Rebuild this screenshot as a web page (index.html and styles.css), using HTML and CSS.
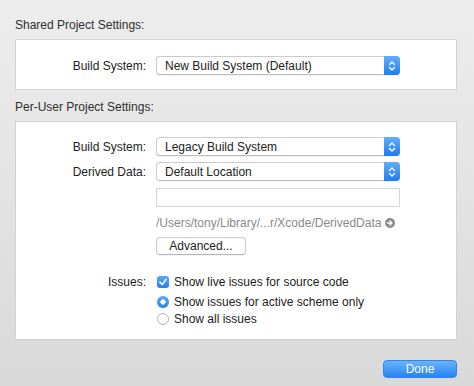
FILE: index.html
```html
<!DOCTYPE html>
<html lang="en">
<head>
    <meta charset="UTF-8">
    <title>Project Settings</title>
    <link rel="stylesheet" href="styles.css">
</head>
<body>
    <div class="sheet">
        <h3 class="section-title">Shared Project Settings:</h3>
        <div class="box box-shared">
            <div class="row">
                <span class="label">Build System:</span>
                <div class="popup">
                    <span class="popup-text">New Build System (Default)</span>
                    <span class="stepper">
                        <svg width="8" height="12" viewBox="0 0 8 12"><path d="M1.5 4.5 L4 2 L6.5 4.5 M1.5 7.5 L4 10 L6.5 7.5" fill="none" stroke="#fff" stroke-width="1.4" stroke-linecap="round" stroke-linejoin="round"/></svg>
                    </span>
                </div>
            </div>
        </div>

        <h3 class="section-title">Per-User Project Settings:</h3>
        <div class="box box-user">
            <div class="row">
                <span class="label">Build System:</span>
                <div class="popup">
                    <span class="popup-text">Legacy Build System</span>
                    <span class="stepper">
                        <svg width="8" height="12" viewBox="0 0 8 12"><path d="M1.5 4.5 L4 2 L6.5 4.5 M1.5 7.5 L4 10 L6.5 7.5" fill="none" stroke="#fff" stroke-width="1.4" stroke-linecap="round" stroke-linejoin="round"/></svg>
                    </span>
                </div>
            </div>
            <div class="row row-tight">
                <span class="label">Derived Data:</span>
                <div class="popup">
                    <span class="popup-text">Default Location</span>
                    <span class="stepper">
                        <svg width="8" height="12" viewBox="0 0 8 12"><path d="M1.5 4.5 L4 2 L6.5 4.5 M1.5 7.5 L4 10 L6.5 7.5" fill="none" stroke="#fff" stroke-width="1.4" stroke-linecap="round" stroke-linejoin="round"/></svg>
                    </span>
                </div>
            </div>
            <div class="row row-field">
                <span class="label"></span>
                <div class="text-field"></div>
            </div>
            <div class="row row-path">
                <span class="label"></span>
                <div class="path">
                    /Users/tony/Library/...r/Xcode/DerivedData
                    <svg width="10" height="10" viewBox="0 0 10 10"><circle cx="5" cy="5" r="5" fill="#8a8a8a"/><path d="M2.5 5 H7 M5 3 L7 5 L5 7" fill="none" stroke="#fff" stroke-width="1.3" stroke-linecap="round" stroke-linejoin="round"/></svg>
                </div>
            </div>
            <div class="row row-button">
                <span class="label"></span>
                <div><button class="push">Advanced...</button></div>
            </div>
            <div class="row row-issues">
                <span class="label">Issues:</span>
                <div class="options">
                    <div class="option option-first">
                        <span class="checkbox">
                            <svg width="10" height="10" viewBox="0 0 10 10"><path d="M2 5.2 L4.2 7.5 L8 2.5" fill="none" stroke="#fff" stroke-width="1.6" stroke-linecap="round" stroke-linejoin="round"/></svg>
                        </span>
                        Show live issues for source code
                    </div>
                    <div class="option">
                        <span class="radio on"></span>
                        Show issues for active scheme only
                    </div>
                    <div class="option">
                        <span class="radio"></span>
                        Show all issues
                    </div>
                </div>
            </div>
        </div>

        <div class="footer">
            <button class="done">Done</button>
        </div>
    </div>
</body>
</html>
```

FILE: styles.css
```css
html, body {
    height: 100%;
}
body {
    margin: 0;
    background: linear-gradient(#ededed, #d9d9d9);
    font-family: 'Liberation Sans', Arial, sans-serif;
    font-size: 12px;
    color: #222;
}
.sheet {
    padding: 17px 17px 0 15px;
}
.section-title {
    margin: 0;
    font-size: 12px;
    font-weight: normal;
    line-height: 16px;
    color: #2e2e2e;
}
.box {
    background: #fff;
    border: 1px solid #d2d2d2;
    margin-top: 6px;
}
.box-shared {
    padding: 16px 0 14px;
    margin-bottom: 9px;
}
.box-user {
    padding: 15px 0 12px;
}
.row {
    display: grid;
    grid-template-columns: 130px 244px;
    column-gap: 10px;
    align-items: center;
}
.row-tight {
    margin-top: 6px;
}
.row-field {
    margin-top: 7px;
}
.row-path {
    margin-top: 8px;
}
.row-button {
    margin-top: 6px;
}
.row-issues {
    margin-top: 19px;
    align-items: start;
}
.label {
    text-align: right;
    line-height: 16px;
}
.row .label:empty {
    line-height: 0;
}
.popup {
    height: 17px;
    display: flex;
    align-items: center;
    justify-content: space-between;
    border: 1px solid #cbcbcb;
    border-bottom-color: #bdbdbd;
    border-radius: 4px;
    background: #fff;
    box-shadow: 0 1px 1px rgba(0,0,0,0.06);
    width: 242px;
}
.popup-text {
    padding-left: 8px;
}
.stepper {
    width: 16px;
    height: 19px;
    margin: -1px -1px -1px 0;
    border-radius: 0 4px 4px 0;
    background: linear-gradient(#63aefb, #1f7cf2);
    display: flex;
    align-items: center;
    justify-content: center;
}
.text-field {
    height: 17px;
    border: 1px solid #d6d6d6;
    background: #fff;
}
.path {
    color: #8a8a8a;
    line-height: 16px;
    display: flex;
    align-items: center;
    gap: 4px;
    white-space: nowrap;
}
.push {
    font: inherit;
    color: #222;
    width: 90px;
    height: 18px;
    padding: 0;
    background: #fff;
    border: 1px solid #c9c9c9;
    border-bottom-color: #b8b8b8;
    border-radius: 4px;
    box-shadow: 0 1px 1px rgba(0,0,0,0.05);
}
.options {
    display: flex;
    flex-direction: column;
    gap: 1px;
}
.option {
    display: flex;
    align-items: center;
    gap: 5px;
    line-height: 16px;
    margin-left: 1px;
}
.option-first {
    margin-bottom: 3px;
}
.checkbox {
    width: 12px;
    height: 12px;
    border-radius: 3px;
    background: linear-gradient(#5aa8fb, #2381f3);
    display: flex;
    align-items: center;
    justify-content: center;
}
.radio {
    width: 12px;
    height: 12px;
    border-radius: 50%;
    border: 1px solid #b5b5b5;
    background: #fff;
    box-sizing: border-box;
}
.radio.on {
    border: none;
    background: radial-gradient(circle, #fff 0 2.4px, transparent 2.9px), linear-gradient(#5aa8fb, #2381f3);
}
.footer {
    display: flex;
    justify-content: flex-end;
    margin-top: 20px;
}
.done {
    font: inherit;
    color: #fff;
    width: 74px;
    height: 18px;
    padding: 0;
    border: 1px solid #2f86f0;
    border-radius: 4px;
    background: linear-gradient(#6cb3fc, #2683f4);
}
```
